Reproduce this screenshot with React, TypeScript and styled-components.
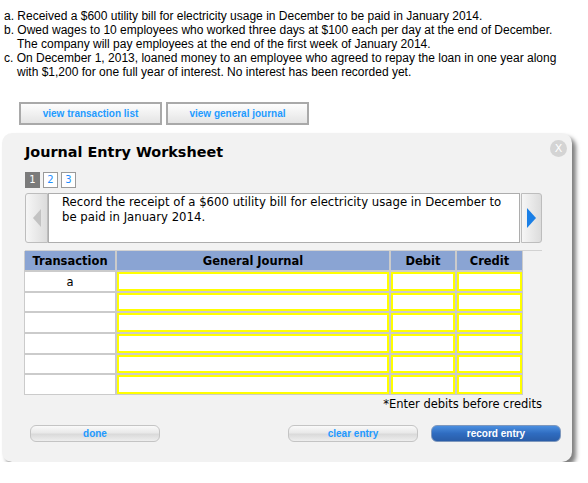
import React from 'react'
import styled, { createGlobalStyle } from 'styled-components'

const GlobalStyle = createGlobalStyle`
  html, body {
    margin: 0;
    padding: 0;
    background: #ffffff;
  }
`

const Page = styled.div`
  width: 588px;
  padding: 9px 0 0 0;
  font-family: 'Liberation Sans', Arial, sans-serif;
`

const Problem = styled.div`
  padding: 0 4px;
  font-size: 12px;
  line-height: 14px;
  color: #000;
`

const Item = styled.p`
  margin: 0;
  padding-left: 13px;
  text-indent: -13px;
  white-space: nowrap;
`

const TopButtons = styled.div`
  display: flex;
  gap: 4px;
  margin: 23px 0 0 19px;
`

const TopButton = styled.button`
  width: 143px;
  height: 23px;
  border: 2px solid #a9a9a9;
  background: linear-gradient(#fdfdfd, #e4e4e4);
  color: #1f9bff;
  font-family: 'Liberation Sans', Arial, sans-serif;
  font-weight: bold;
  font-size: 10px;
  padding: 0;
  cursor: pointer;
`

const Panel = styled.div`
  position: relative;
  margin: 8px 0 0 2px;
  width: 570px;
  background: #f2f2f2;
  border-radius: 10px;
  box-shadow: 4px 4px 4px rgba(0, 0, 0, 0.5);
  padding: 11px 0 20px 0;
  font-family: 'DejaVu Sans', Verdana, sans-serif;
  box-sizing: border-box;
`

const Close = styled.div`
  position: absolute;
  top: 7px;
  right: 5px;
  width: 17px;
  height: 17px;
  border-radius: 50%;
  background: #d4d4d4;
  color: #fff;
  font-size: 11px;
  line-height: 17px;
  text-align: center;
`

const Content = styled.div`
  padding: 0 30px 0 23px;
`

const Title = styled.h2`
  margin: 0;
  font-size: 14.4px;
  line-height: 17px;
  font-weight: bold;
  color: #000;
`

const Tabs = styled.div`
  display: flex;
  gap: 3px;
  margin-top: 11px;
`

const Tab = styled.div<{ $active?: boolean }>`
  width: 15px;
  height: 16px;
  box-sizing: border-box;
  border: 1px solid ${({ $active }) => ($active ? '#7b7b7b' : '#9a9a9a')};
  background: ${({ $active }) => ($active ? '#7b7b7b' : '#ffffff')};
  color: ${({ $active }) => ($active ? '#ffffff' : '#1f8fff')};
  font-size: 10px;
  line-height: 14px;
  text-align: center;
`

const Prompt = styled.div`
  display: flex;
  height: 50px;
  margin-top: 5px;
`

const Arrow = styled.div<{ $side: 'left' | 'right' }>`
  width: ${({ $side }) => ($side === 'left' ? '23px' : '21px')};
  box-sizing: border-box;
  border: 1px solid #bdbdbd;
  border-radius: ${({ $side }) => ($side === 'left' ? '3px 0 0 3px' : '0 3px 3px 0')};
  background: linear-gradient(90deg, #f6f6f6, #dcdcdc);
  display: flex;
  align-items: center;
  justify-content: center;
  margin-left: ${({ $side }) => ($side === 'right' ? '1px' : '0')};
`

const PromptText = styled.div`
  flex: 1;
  background: #fff;
  border: 1px solid #adadad;
  padding: 1px 4px 1px 13px;
  font-size: 11.7px;
  line-height: 15px;
  color: #000;
`

const TableWrap = styled.div`
  margin-top: 7px;
  border-top: 1px solid #d2d2d2;
`

const Grid = styled.div`
  display: grid;
  grid-template-columns: 90px 272px 64px 65px;
  grid-template-rows: 19px;
  grid-auto-rows: 18.7px;
  gap: 2px;
  width: 499px;
  background: #cbcbcb;
  border: 1px solid #cbcbcb;
  border-top: none;
  box-sizing: border-box;
  margin-left: -1px;
`

const Head = styled.div`
  background: #8aa4d3;
  font-weight: bold;
  font-size: 11.5px;
  line-height: 19px;
  padding-top: 1px;
  box-sizing: border-box;
  text-align: center;
  color: #000;
`

const Cell = styled.div`
  background: #fff;
  font-size: 11.5px;
  line-height: 18px;
  padding-top: 1px;
  box-sizing: border-box;
  text-align: center;
`

const Input = styled.div`
  background: #fff;
  border: 2px solid #ffff00;
  box-sizing: border-box;
`

const Note = styled.div`
  text-align: right;
  font-size: 11.5px;
  line-height: 14px;
  margin-top: 2px;
  color: #000;
`

const Footer = styled.div`
  display: flex;
  align-items: center;
  padding: 0 11px 0 28px;
  margin-top: 14px;
`

const ActionButton = styled.button<{ $primary?: boolean }>`
  width: 130px;
  height: 17px;
  padding: 0;
  border-radius: 6px;
  border: 1px solid ${({ $primary }) => ($primary ? '#7e98bd' : '#c4c4c4')};
  background: ${({ $primary }) =>
    $primary
      ? 'linear-gradient(#4b8fe0, #2f6cc0 50%, #2a5da8)'
      : 'linear-gradient(#fafafa, #e9e9e9 45%, #dadada 55%, #eeeeee)'};
  color: ${({ $primary }) => ($primary ? '#ffffff' : '#2299ff')};
  font-family: 'Liberation Sans', Arial, sans-serif;
  font-weight: bold;
  font-size: 10px;
  line-height: 14px;
  cursor: pointer;
`

const Spacer = styled.div`
  flex: 1;
`

const rows = ['a', '', '', '', '', '']

export default function App() {
  return (
    <>
      <GlobalStyle />
      <Page>
        <Problem>
          <Item>a. Received a $600 utility bill for electricity usage in December to be paid in January 2014.</Item>
          <Item>
            b. Owed wages to 10 employees who worked three days at $100 each per day at the end of December.
            <br />
            The company will pay employees at the end of the first week of January 2014.
          </Item>
          <Item>
            c. On December 1, 2013, loaned money to an employee who agreed to repay the loan in one year along
            <br />
            with $1,200 for one full year of interest. No interest has been recorded yet.
          </Item>
        </Problem>
        <TopButtons>
          <TopButton>view transaction list</TopButton>
          <TopButton>view general journal</TopButton>
        </TopButtons>
        <Panel>
          <Close>X</Close>
          <Content>
            <Title>Journal Entry Worksheet</Title>
            <Tabs>
              <Tab $active>1</Tab>
              <Tab>2</Tab>
              <Tab>3</Tab>
            </Tabs>
            <Prompt>
              <Arrow $side="left">
                <svg width="8" height="18" viewBox="0 0 8 18">
                  <path d="M8 0 L0 9 L8 18 Z" fill="#c2c2c2" />
                </svg>
              </Arrow>
              <PromptText>
                Record the receipt of a $600 utility bill for electricity usage in December to be paid in January 2014.
              </PromptText>
              <Arrow $side="right">
                <svg width="9" height="20" viewBox="0 0 9 20">
                  <path d="M0 0 L9 10 L0 20 Z" fill="#1a7fe6" />
                </svg>
              </Arrow>
            </Prompt>
            <TableWrap>
              <Grid>
                <Head>Transaction</Head>
                <Head>General Journal</Head>
                <Head>Debit</Head>
                <Head>Credit</Head>
                {rows.map((r, i) => (
                  <React.Fragment key={i}>
                    <Cell>{r}</Cell>
                    <Input />
                    <Input />
                    <Input />
                  </React.Fragment>
                ))}
              </Grid>
            </TableWrap>
            <Note>*Enter debits before credits</Note>
          </Content>
          <Footer>
            <ActionButton>done</ActionButton>
            <Spacer />
            <ActionButton>clear entry</ActionButton>
            <ActionButton $primary style={{ marginLeft: 13 }}>record entry</ActionButton>
          </Footer>
        </Panel>
      </Page>
    </>
  )
}
